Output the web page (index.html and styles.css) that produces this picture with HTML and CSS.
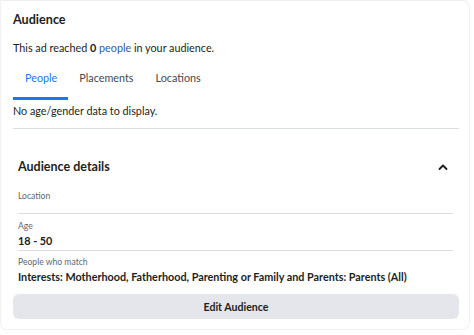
FILE: index.html
```html
<!DOCTYPE html>
<html lang="en">
<head>
    <meta charset="UTF-8">
    <meta name="viewport" content="width=device-width, initial-scale=1.0">
    <title>Audience</title>
    <link rel="stylesheet" href="styles.css">
</head>
<body>
    <div class="card">
        <h2 class="title">Audience</h2>
        <p class="summary">This ad reached <b>0</b> <a href="#" class="link">people</a> in your audience.</p>

        <div class="tabs">
            <div class="tab active">People</div>
            <div class="tab">Placements</div>
            <div class="tab">Locations</div>
        </div>

        <p class="empty">No age/gender data to display.</p>

        <div class="details">
            <div class="details-head">
                <h3>Audience details</h3>
                <svg class="chevron" width="12" height="12" viewBox="0 0 12 12">
                    <path d="M2.5 8 L6 4.5 L9.5 8" fill="none" stroke="#1c1e21" stroke-width="1.8" stroke-linecap="round" stroke-linejoin="round"/>
                </svg>
            </div>

            <div class="row first">
                <div class="label">Location</div>
            </div>
            <div class="row">
                <div class="label">Age</div>
                <div class="value">18 - 50</div>
            </div>
            <div class="row last">
                <div class="label">People who match</div>
                <div class="value">Interests: Motherhood, Fatherhood, Parenting or Family and Parents: Parents (All)</div>
            </div>
        </div>

        <button class="edit">Edit Audience</button>
    </div>
</body>
</html>
```

FILE: styles.css
```css
body {
    margin: 0;
    background: #ffffff;
    font-family: Lato, "Liberation Sans", sans-serif;
    color: #1c1e21;
}
.card {
    margin: 0 4px 4px 0;
    height: 330px;
    box-sizing: border-box;
    border: 1px solid #f2f2f2;
    border-top-color: #eeeeee;
    border-radius: 0 8px 8px 6px;
    padding: 0 10px 0 12px;
}
.title {
    margin: 9px 0 0;
    font-size: 12.6px;
    font-weight: 700;
    line-height: 20px;
}
.summary {
    margin: 8px 0 0;
    font-size: 10.8px;
    line-height: 20px;
}
.summary b {
    font-weight: 700;
}
.link {
    color: #385898;
    text-decoration: none;
}
.tabs {
    display: flex;
}
.tab {
    padding: 10px 11px 9px;
    font-size: 10.8px;
    line-height: 20px;
    color: #444950;
    border-bottom: 3px solid transparent;
}
.tab.active {
    padding-left: 12px;
    color: #1877f2;
    border-bottom-color: #1877f2;
}
.empty {
    margin: 1px 0 0;
    padding-bottom: 7px;
    font-size: 10.8px;
    line-height: 20px;
    border-bottom: 1px solid #dadde1;
}
.details {
    padding: 0 6px 0 5px;
}
.details-head {
    display: flex;
    align-items: center;
    justify-content: space-between;
    margin-top: 27px;
    height: 22px;
}
.details-head h3 {
    margin: 0;
    font-size: 12.5px;
    font-weight: 700;
    line-height: 22px;
}
.chevron {
    margin-right: 4px;
}
.row {
    padding: 6px 0 2px;
    border-bottom: 1px solid #dadde1;
}
.row.first {
    padding: 12px 0 10px;
}
.row.last {
    padding-top: 5px;
    border-bottom: none;
}
.label {
    font-size: 8.6px;
    line-height: 13px;
    color: #606770;
}
.value {
    font-size: 10.8px;
    font-weight: 700;
    line-height: 15px;
}
.edit {
    display: block;
    width: 100%;
    height: 25px;
    margin-top: 8px;
    border: none;
    border-radius: 6px;
    background: #e4e6eb;
    color: #1c1e21;
    font-family: inherit;
    font-size: 10.6px;
    font-weight: 700;
    cursor: pointer;
}
```
